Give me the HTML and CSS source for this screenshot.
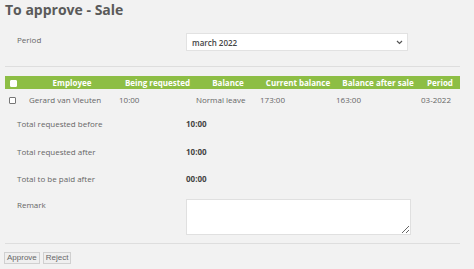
FILE: index.html
```html
<!DOCTYPE html>
<html>
<head>
<meta charset="utf-8">
<link rel="stylesheet" href="styles.css">
</head>
<body>
<div class="page">
  <h1 class="title">To approve - Sale</h1>
  <div class="form-row period-row">
    <div class="label">Period</div>
    <div class="field">
      <div class="select">
        <span>march 2022</span>
        <svg class="chev" width="7" height="5" viewBox="0 0 7 5"><path d="M1 1 L3.5 3.5 L6 1" fill="none" stroke="#555" stroke-width="1.2"/></svg>
      </div>
    </div>
  </div>
  <div class="sep"></div>
  <table class="grid">
    <thead>
      <tr>
        <th class="c-check"><span class="cb cb-head"></span></th>
        <th class="c-emp">Employee</th>
        <th class="c-req">Being requested</th>
        <th class="c-bal">Balance</th>
        <th class="c-cur">Current balance</th>
        <th class="c-after">Balance after sale</th>
        <th class="c-per">Period</th>
      </tr>
    </thead>
    <tbody>
      <tr>
        <td class="c-check"><span class="cb"></span></td>
        <td class="c-emp">Gerard van Vleuten</td>
        <td class="c-req">10:00</td>
        <td class="c-bal">Normal leave</td>
        <td class="c-cur">173:00</td>
        <td class="c-after">163:00</td>
        <td class="c-per">03-2022</td>
      </tr>
    </tbody>
  </table>
  <div class="form-row total-row">
    <div class="label">Total requested before</div>
    <div class="field val">10:00</div>
  </div>
  <div class="form-row total-row">
    <div class="label">Total requested after</div>
    <div class="field val">10:00</div>
  </div>
  <div class="form-row total-row">
    <div class="label">Total to be paid after</div>
    <div class="field val">00:00</div>
  </div>
  <div class="form-row remark-row">
    <div class="label">Remark</div>
    <div class="field"><textarea class="remark"></textarea></div>
  </div>
  <div class="sep sep2"></div>
  <div class="buttons">
    <button class="btn">Approve</button>
    <button class="btn">Reject</button>
  </div>
</div>
</body>
</html>
```

FILE: styles.css
```css
* { box-sizing: border-box; }
html, body { margin: 0; padding: 0; background: #f2f2f2; }
body {
  font-family: "Open Sans", "DejaVu Sans", sans-serif;
  font-size: 8px;
  color: #666;
}
.page { padding: 0 14px 0 5px; width: 474px; }
.title {
  margin: 0;
  padding-top: 1px;
  font-size: 14px;
  font-weight: 700;
  color: #5a5a5a;
  line-height: 18px;
  height: 22px;
}
.form-row { display: flex; }
.label { width: 181px; padding-left: 12px; flex: 0 0 auto; }
.field { flex: 0 0 auto; }
.period-row { height: 44px; padding-top: 12px; }
.period-row .label { line-height: 12px; }
.select {
  margin-top: -1px;
  width: 222px;
  height: 18px;
  background: #fff;
  border: 1px solid #e2e2e2;
  display: flex;
  align-items: center;
  justify-content: space-between;
  padding: 0 4px 0 5px;
  color: #444;
  font-weight: 600;
}
.sep { height: 1px; background: #dedede; }
.grid {
  margin-top: 9px;
  width: 455px;
  border-collapse: collapse;
}
.grid th {
  background: #8dbe45;
  color: #fff;
  font-weight: 700;
  height: 13px;
  padding: 0;
  line-height: 13px;
  text-align: center;
}
.grid td { height: 20px; padding: 0; text-align: left; }
.c-check { width: 20px; }
.grid th.c-check { text-align: left; padding-left: 5px; }
.grid td.c-check { padding-left: 4px; }
.cb {
  display: inline-block;
  width: 7px; height: 7px;
  border: 1px solid #777;
  background: #fff;
  border-radius: 1px;
  vertical-align: middle;
}
.cb-head { border-color: #fff; }
.c-emp { width: 94px; }
.grid td.c-emp { padding-left: 4px; }
.c-req { width: 77px; }
.c-bal { width: 64px; }
.c-cur { width: 76px; }
.c-after { width: 84px; }
.c-per { width: 40px; }
.grid td.c-per { padding-left: 1px; }
.total-row { height: 27.5px; padding-top: 9px; }
.val { font-weight: 700; color: #444; }
.remark-row { padding-top: 7px; }
.remark-row .label { padding-top: 0; }
.remark {
  display: block;
  width: 225px;
  height: 36px;
  background: #fff;
  border: 1px solid #e0e0e0;
  margin: 0;
}
.sep2 { margin-top: 8px; }
.buttons { display: flex; gap: 3px; padding-top: 8px; margin-left: -1px; }
.btn {
  font-family: "Liberation Sans", sans-serif;
  font-size: 8px;
  color: #666;
  background: #efefef;
  border: 1px solid #d0d0d0;
  padding: 1px 2px;
  height: 12px;
  line-height: 8px;
}
```
